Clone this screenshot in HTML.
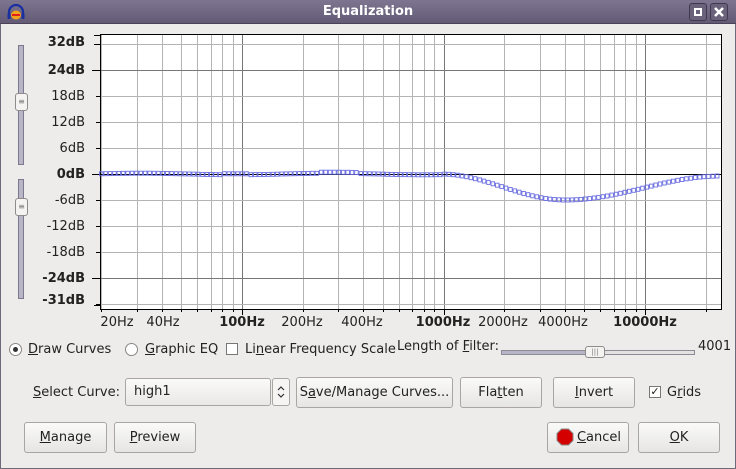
<!DOCTYPE html>
<html><head><meta charset="utf-8"><style>
*{box-sizing:border-box}
body{margin:0;width:736px;height:469px;overflow:hidden;background:#edeceb;font-family:"DejaVu Sans","Liberation Sans",sans-serif;font-size:13px;color:#222;position:relative}
.abs{position:absolute}
#title{left:0;top:0;width:736px;height:24px;background:linear-gradient(#7e7690,#635a75);border-bottom:1px solid #4a4358;color:#fff;font-weight:bold;text-align:center;line-height:24px;font-size:13px}
#frame{left:0;top:24px;width:736px;height:445px;border:1px solid #6f6a78;border-top:none}
.btn{position:absolute;height:31px;border:1px solid #a9a6a2;border-radius:3px;background:linear-gradient(#fafaf9,#e6e5e3);text-align:center;line-height:29px}
.ylab{position:absolute;right:651px;font-size:13px;text-align:right;line-height:14px}
.b{font-weight:bold}
.xlab{position:absolute;top:315px;font-size:13px;transform:translateX(-50%)}
u{text-decoration:underline}
.tb{position:absolute;top:3px;width:18px;height:18px;border:1px solid #3f3950;border-radius:3px;background:#6a627b}
</style></head><body>
<div id="title" class="abs">Equalization</div>
<svg class="abs" style="left:6px;top:3px" width="20" height="18" viewBox="0 0 20 18"><path d="M3 12 V9 A7 7 0 0 1 17 9 V12" fill="none" stroke="#1a2fa0" stroke-width="2.2"/><rect x="1.5" y="10" width="3" height="6" rx="1" fill="#1a2fa0"/><rect x="15.5" y="10" width="3" height="6" rx="1" fill="#1a2fa0"/><ellipse cx="10" cy="12" rx="5" ry="4.5" fill="#f3a21a"/><rect x="6" y="11" width="8" height="2" fill="#e02020"/></svg>
<div class="tb" style="left:689px"><div style="position:absolute;left:4px;top:4px;width:8px;height:8px;border:2px solid #fff"></div></div>
<div class="tb" style="left:710px"><svg width="16" height="16" viewBox="0 0 16 16"><path d="M4 4 L12 12 M12 4 L4 12" stroke="#fff" stroke-width="2.5"/></svg></div>
<div id="frame" class="abs"></div>

<div class="abs" style="left:18px;top:45px;width:6px;height:120px;background:#b8b5c6;border:1px solid #7b7890"></div>
<div class="abs" style="left:15px;top:93px;width:13px;height:18px;border:1px solid #8e8b88;border-radius:3px;background:#f4f3f2;font-size:8px;text-align:center;line-height:15px;color:#777">≡</div>
<div class="abs" style="left:18px;top:179px;width:6px;height:120px;background:#b8b5c6;border:1px solid #7b7890"></div>
<div class="abs" style="left:15px;top:198px;width:13px;height:18px;border:1px solid #8e8b88;border-radius:3px;background:#f4f3f2;font-size:8px;text-align:center;line-height:15px;color:#777">≡</div>

<div class="ylab b" style="top:36px">32dB</div>
<div class="ylab b" style="top:64px">24dB</div>
<div class="ylab" style="top:90px">18dB</div>
<div class="ylab" style="top:116px">12dB</div>
<div class="ylab" style="top:142px">6dB</div>
<div class="ylab b" style="top:168px">0dB</div>
<div class="ylab" style="top:194px">-6dB</div>
<div class="ylab" style="top:220px">-12dB</div>
<div class="ylab" style="top:246px">-18dB</div>
<div class="ylab b" style="top:272px">-24dB</div>
<div class="ylab b" style="top:294px">-31dB</div>

<svg id="plot" class="abs" style="left:0;top:0" width="736" height="340"></svg>

<div class="xlab" style="left:117px">20Hz</div>
<div class="xlab" style="left:163px">40Hz</div>
<div class="xlab b" style="left:242px">100Hz</div>
<div class="xlab" style="left:302px">200Hz</div>
<div class="xlab" style="left:362px">400Hz</div>
<div class="xlab b" style="left:443px">1000Hz</div>
<div class="xlab" style="left:503px">2000Hz</div>
<div class="xlab" style="left:563px">4000Hz</div>
<div class="xlab b" style="left:645px">10000Hz</div>

<div class="abs" style="left:9px;top:343px;width:13px;height:13px;border:1px solid #8a8784;border-radius:50%;background:#fff"><div style="margin:3px;width:5px;height:5px;border-radius:50%;background:#333"></div></div>
<div class="abs" style="left:28px;top:342px"><u>D</u>raw Curves</div>
<div class="abs" style="left:125px;top:343px;width:13px;height:13px;border:1px solid #8a8784;border-radius:50%;background:#fff"></div>
<div class="abs" style="left:145px;top:342px"><u>G</u>raphic EQ</div>
<div class="abs" style="left:226px;top:343px;width:12px;height:12px;border:1px solid #777;background:#fff"></div>
<div class="abs" style="left:245px;top:342px">Li<u>n</u>ear Frequency Scale</div>
<div class="abs" style="left:397px;top:339px">Length of <u>F</u>ilter:</div>
<div class="abs" style="left:501px;top:350px;width:194px;height:5px;background:linear-gradient(90deg,#b8b5c6 45%,#e3e2e0 45%);border:1px solid #8e8b98"></div>
<div class="abs" style="left:585px;top:346px;width:20px;height:12px;border:1px solid #8e8b88;border-radius:3px;background:#f4f3f2;font-size:7px;text-align:center;line-height:10px;color:#777">|||</div>
<div class="abs" style="left:698px;top:339px">4001</div>

<div class="abs" style="left:33px;top:385px"><u>S</u>elect Curve:</div>
<div class="abs" style="left:125px;top:378px;width:146px;height:28px;border:1px solid #a9a6a2;border-radius:3px;background:linear-gradient(#fafaf9,#e9e8e6);padding-left:8px;line-height:26px">high1</div>
<div class="abs" style="left:272px;top:378px;width:18px;height:28px;border:1px solid #a9a6a2;border-radius:3px;background:#f6f5f4"><svg width="16" height="26" viewBox="0 0 16 26"><path d="M5 11 L8 8 L11 11 M5 15 L8 18 L11 15" fill="none" stroke="#333" stroke-width="1.2"/></svg></div>
<div class="btn" style="left:296px;top:377px;width:157px"><span>S<u>a</u>ve/Manage Curves...</span></div>
<div class="btn" style="left:460px;top:377px;width:82px">Fla<u>t</u>ten</div>
<div class="btn" style="left:553px;top:377px;width:82px"><u>I</u>nvert</div>
<div class="abs" style="left:649px;top:386px;width:12px;height:12px;border:1px solid #777;background:#fff;font-size:11px;line-height:10px;text-align:center">✓</div>
<div class="abs" style="left:667px;top:385px">G<u>r</u>ids</div>

<div class="btn" style="left:24px;top:422px;width:83px"><u>M</u>anage</div>
<div class="btn" style="left:114px;top:422px;width:82px"><u>P</u>review</div>
<div class="btn" style="left:547px;top:422px;width:82px;padding-left:22px"><u>C</u>ancel</div>
<svg class="abs" style="left:556px;top:428px" width="18" height="18" viewBox="0 0 18 18"><polygon points="5.5,1 12.5,1 17,5.5 17,12.5 12.5,17 5.5,17 1,12.5 1,5.5" fill="#d40000" stroke="#888" stroke-width="1"/></svg>
<div class="btn" style="left:638px;top:422px;width:82px"><u>O</u>K</div>

<script>
var s='',L=100,R=721,T=34,B=309;
var dx=201.5,x100=242;
function fx(f){return x100+dx*Math.log10(f/100);}
s+='<rect x="'+L+'.5" y="'+T+'.5" width="'+(R-L)+'" height="'+(B-T)+'" fill="#fff" stroke="#000"/>';
var fs=[];for(var d=10;d<=10000;d*=10)for(var k=1;k<10;k++){var f=d*k;if(f>=20&&f<=20000)fs.push(f);}
fs.forEach(function(f){var x=Math.round(fx(f))+.5;var maj=(f==100||f==1000||f==10000);
s+='<line x1="'+x+'" y1="'+(T+1)+'" x2="'+x+'" y2="'+B+'" stroke="'+(maj?'#777':'#b4b4b4')+'"/>';
s+='<line x1="'+x+'" y1="'+(B+1)+'" x2="'+x+'" y2="'+(B+(maj?6:3))+'" stroke="#000"/>';});
for(var db=-30;db<=30;db+=6){var y=Math.round(174-db*26/6)+.5;if(y<T||y>B)continue;var maj=(db%24==0);
s+='<line x1="'+(L+1)+'" y1="'+y+'" x2="'+R+'" y2="'+y+'" stroke="'+(db==0?'#000':maj?'#777':'#b4b4b4')+'"/>';
s+='<line x1="'+(maj?92:96)+'" y1="'+y+'" x2="'+L+'" y2="'+y+'" stroke="#000"/>';}
[35.5,44.5,305.5].forEach(function(y){s+='<line x1="94" y1="'+y+'" x2="'+L+'" y2="'+y+'" stroke="#000"/>';});
for(var x=101;x<=719;x+=4.4){var y;
if(x<440){y=173.5+0.8*Math.sin(x/30)-(x>220&&x<250?1:0)-(x>320&&x<360?1:0);}
else if(x<565){y=173.5+(1-Math.cos(Math.PI*(x-440)/125))/2*26;}
else{y=175.5+(1+Math.cos(Math.PI*(x-565)/156))/2*24;}
s+='<rect x="'+(x-1.5).toFixed(1)+'" y="'+(y-1.5).toFixed(1)+'" width="3.5" height="4" fill="none" stroke="#6a6ee0" stroke-width="0.9"/>';}
document.getElementById('plot').innerHTML=s;
</script>
</body></html>
